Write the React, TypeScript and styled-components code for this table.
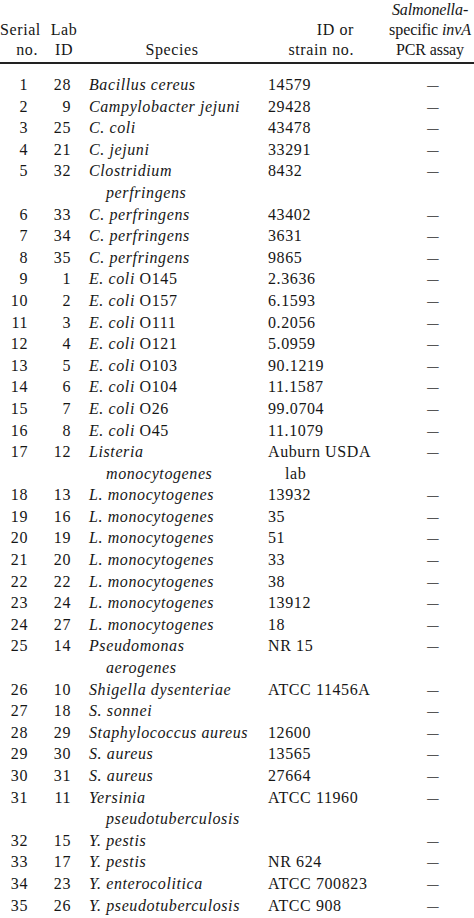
import React from "react";
import styled, { createGlobalStyle } from "styled-components";

const GlobalStyle = createGlobalStyle`
  html, body {
    margin: 0;
    padding: 0;
    background: #ffffff;
  }
  body {
    font-family: "Liberation Serif", "Times New Roman", serif;
    color: #161616;
  }
`;

const Table = styled.div`
  width: 474px;
  font-size: 16px;
  line-height: 21.6px;
  letter-spacing: 0.6px;
  overflow: hidden;
`;

const HeaderRow = styled.div`
  display: grid;
  grid-template-columns: 38px 52px 164px 132px 88px;
  align-items: end;
  line-height: 20px;
  padding-bottom: 2px;
  border-bottom: 2px solid #222;
`;

const Body = styled.div`
  padding-top: 10px;
`;

const Row = styled.div`
  display: grid;
  grid-template-columns: 28px 43px 197px 124px 82px;
  align-items: start;
`;

const Cell = styled.div<{
  $align?: "left" | "right" | "center";
  $padL?: number;
  $padR?: number;
  $tight?: boolean;
}>`
  text-align: ${(p) => p.$align || "left"};
  padding-left: ${(p) => p.$padL || 0}px;
  padding-right: ${(p) => p.$padR || 0}px;
  letter-spacing: ${(p) => (p.$tight ? "-0.1px" : "inherit")};
  white-space: nowrap;
`;

const Line = styled.div<{ $indent?: boolean }>`
  padding-left: ${(p) => (p.$indent ? 17 : 0)}px;
`;

const Dash = styled.span`
  display: inline-block;
  color: #555;
  transform: scaleX(1.4);
`;

type Entry = {
  n: number;
  lab: number;
  species: React.ReactNode[];
  id: string[];
};

const E = (serotype: string) => (
  <>
    <i>E. coli</i> {serotype}
  </>
);

const rows: Entry[] = [
  { n: 1, lab: 28, species: [<i>Bacillus cereus</i>], id: ["14579"] },
  { n: 2, lab: 9, species: [<i>Campylobacter jejuni</i>], id: ["29428"] },
  { n: 3, lab: 25, species: [<i>C. coli</i>], id: ["43478"] },
  { n: 4, lab: 21, species: [<i>C. jejuni</i>], id: ["33291"] },
  { n: 5, lab: 32, species: [<i>Clostridium</i>, <i>perfringens</i>], id: ["8432"] },
  { n: 6, lab: 33, species: [<i>C. perfringens</i>], id: ["43402"] },
  { n: 7, lab: 34, species: [<i>C. perfringens</i>], id: ["3631"] },
  { n: 8, lab: 35, species: [<i>C. perfringens</i>], id: ["9865"] },
  { n: 9, lab: 1, species: [E("O145")], id: ["2.3636"] },
  { n: 10, lab: 2, species: [E("O157")], id: ["6.1593"] },
  { n: 11, lab: 3, species: [E("O111")], id: ["0.2056"] },
  { n: 12, lab: 4, species: [E("O121")], id: ["5.0959"] },
  { n: 13, lab: 5, species: [E("O103")], id: ["90.1219"] },
  { n: 14, lab: 6, species: [E("O104")], id: ["11.1587"] },
  { n: 15, lab: 7, species: [E("O26")], id: ["99.0704"] },
  { n: 16, lab: 8, species: [E("O45")], id: ["11.1079"] },
  { n: 17, lab: 12, species: [<i>Listeria</i>, <i>monocytogenes</i>], id: ["Auburn USDA", "lab"] },
  { n: 18, lab: 13, species: [<i>L. monocytogenes</i>], id: ["13932"] },
  { n: 19, lab: 16, species: [<i>L. monocytogenes</i>], id: ["35"] },
  { n: 20, lab: 19, species: [<i>L. monocytogenes</i>], id: ["51"] },
  { n: 21, lab: 20, species: [<i>L. monocytogenes</i>], id: ["33"] },
  { n: 22, lab: 22, species: [<i>L. monocytogenes</i>], id: ["38"] },
  { n: 23, lab: 24, species: [<i>L. monocytogenes</i>], id: ["13912"] },
  { n: 24, lab: 27, species: [<i>L. monocytogenes</i>], id: ["18"] },
  { n: 25, lab: 14, species: [<i>Pseudomonas</i>, <i>aerogenes</i>], id: ["NR 15"] },
  { n: 26, lab: 10, species: [<i>Shigella dysenteriae</i>], id: ["ATCC 11456A"] },
  { n: 27, lab: 18, species: [<i>S. sonnei</i>], id: [""] },
  { n: 28, lab: 29, species: [<i>Staphylococcus aureus</i>], id: ["12600"] },
  { n: 29, lab: 30, species: [<i>S. aureus</i>], id: ["13565"] },
  { n: 30, lab: 31, species: [<i>S. aureus</i>], id: ["27664"] },
  { n: 31, lab: 11, species: [<i>Yersinia</i>, <i>pseudotuberculosis</i>], id: ["ATCC 11960"] },
  { n: 32, lab: 15, species: [<i>Y. pestis</i>], id: [""] },
  { n: 33, lab: 17, species: [<i>Y. pestis</i>], id: ["NR 624"] },
  { n: 34, lab: 23, species: [<i>Y. enterocolitica</i>], id: ["ATCC 700823"] },
  { n: 35, lab: 26, species: [<i>Y. pseudotuberculosis</i>], id: ["ATCC 908"] },
];

function Lines({ items }: { items: React.ReactNode[] }) {
  return (
    <>
      {items.map((item, i) => (
        <Line key={i} $indent={i > 0}>
          {item === "" ? "\u00a0" : item}
        </Line>
      ))}
    </>
  );
}

export default function App() {
  return (
    <>
      <GlobalStyle />
      <Table>
        <HeaderRow>
          <Cell $align="right">
            Serial
            <br />
            no.
          </Cell>
          <Cell $align="center">
            Lab
            <br />
            ID
          </Cell>
          <Cell $align="center">Species</Cell>
          <Cell $align="right" $padR={32}>
            ID or
            <br />
            strain no.
          </Cell>
          <Cell $align="center" $tight>
            <i>Salmonella</i>-
            <br />
            specific <i>invA</i>
            <br />
            PCR assay
          </Cell>
        </HeaderRow>
        <Body>
          {rows.map((r) => (
            <Row key={r.n}>
              <Cell $align="right">{r.n}</Cell>
              <Cell $align="right">{r.lab}</Cell>
              <Cell $padL={18}>
                <Lines items={r.species} />
              </Cell>
              <Cell>
                <Lines items={r.id} />
              </Cell>
              <Cell $align="center">
                <Dash>–</Dash>
              </Cell>
            </Row>
          ))}
        </Body>
      </Table>
    </>
  );
}
